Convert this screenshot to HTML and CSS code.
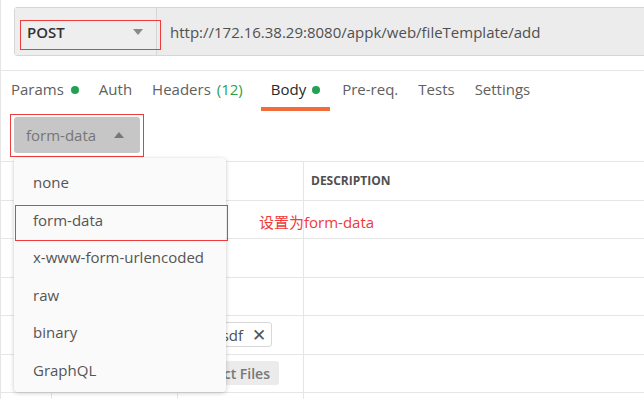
FILE: index.html
```html
<!DOCTYPE html>
<html>
<head>
<meta charset="utf-8">
<link rel="stylesheet" href="styles.css">
</head>
<body>
<div class="page">
  <div class="top">
    <div class="urlbar">
      <div class="method">
        <span class="method-name">POST</span>
        <span class="caret-down"></span>
        <span class="mark mark-method"></span>
      </div>
      <div class="url">http://172.16.38.29:8080/appk/web/fileTemplate/add</div>
    </div>
  </div>

  <div class="tabs">
    <div class="tab">Params<span class="dot"></span></div>
    <div class="tab">Auth</div>
    <div class="tab">Headers <span class="count">(12)</span></div>
    <div class="tab active">Body<span class="dot"></span></div>
    <div class="tab">Pre-req.</div>
    <div class="tab">Tests</div>
    <div class="tab">Settings</div>
  </div>

  <div class="bodytype">
    <div class="select-wrap">
      <div class="select">form-data<span class="caret-up"></span></div>
      <span class="mark mark-select"></span>
      <ul class="menu">
        <li>none</li>
        <li>form-data</li>
        <li>x-www-form-urlencoded</li>
        <li>raw</li>
        <li>binary</li>
        <li>GraphQL</li>
        <span class="mark mark-item"></span>
      </ul>
    </div>
    <span class="note">设置为form-data</span>
  </div>

  <div class="table">
    <div class="cell"></div>
    <div class="cell head"></div>
    <div class="cell head"></div>
    <div class="cell head">DESCRIPTION</div>

    <div class="cell"></div><div class="cell"></div><div class="cell"></div><div class="cell"></div>
    <div class="cell"></div><div class="cell"></div><div class="cell"></div><div class="cell"></div>
    <div class="cell"></div><div class="cell"></div><div class="cell"></div><div class="cell"></div>

    <div class="cell"></div><div class="cell"></div>
    <div class="cell val"><span class="chip"><span class="chip-text">test.sdf</span><span class="chip-x">✕</span></span></div>
    <div class="cell"></div>

    <div class="cell"></div><div class="cell"></div>
    <div class="cell val"><span class="btn">Select Files</span></div>
    <div class="cell"></div>

    <div class="cell"></div><div class="cell"></div>
    <div class="cell val"><span class="btn btn-out"></span></div>
    <div class="cell"></div>
  </div>
</div>
</body>
</html>
```

FILE: styles.css
```css
* { box-sizing: border-box; }
html, body { margin: 0; padding: 0; background: #fff; }
body {
  font-family: "Open Sans", "Noto Sans CJK SC", sans-serif;
  font-size: 15px;
  color: #505050;
  overflow: hidden;
  width: 644px;
  height: 399px;
}
.page {
  border-left: 1px solid #e6e6e6;
  height: 399px;
  overflow: hidden;
}

/* top url bar */
.top {
  height: 71px;
  border-bottom: 1px solid #e6e6e6;
  padding: 7px 0 0 13px;
}
.urlbar {
  display: flex;
  height: 49px;
  margin-right: -10px;
  border: 1px solid #d6d6d6;
  border-radius: 3px;
  background: #ececec;
}
.method {
  position: relative;
  width: 142px;
  flex: none;
  display: flex;
  align-items: center;
  padding-left: 12px;
  background: #eeeeee;
  border-right: 1px solid #d6d6d6;
}
.method-name { font-weight: 600; color: #333; flex: 1; }
.caret-down {
  width: 0; height: 0;
  margin-right: 13px;
  border-left: 5px solid transparent;
  border-right: 5px solid transparent;
  border-top: 6px solid #8a8a8a;
}
.url {
  display: flex;
  align-items: center;
  padding-left: 13px;
  color: #505050;
}

/* annotation marks */
.mark {
  position: absolute;
  border: 1px solid #ee3b3b;
  pointer-events: none;
}
.mark-method { left: 5px; top: 12px; width: 141px; height: 30px; }
.mark-select { left: -4px; top: -3px; width: 134px; height: 43px; }
.mark-item { left: 1px; top: 47px; width: 213px; height: 36px; }

/* tabs */
.tabs {
  display: flex;
  padding-left: 0;
  height: 40px;
}
.tab {
  display: flex;
  align-items: flex-start;
  padding: 8px 10px 0;
  height: 40px;
  line-height: 21px;
  color: #606060;
  border-bottom: 4px solid transparent;
}
.tab:first-child .dot { margin-left: 7px; }
.tab.active { color: #282828; border-bottom-color: #f26b3a; margin-left: 8px; margin-right: 2px; }
.dot {
  width: 8px; height: 8px;
  border-radius: 50%;
  background: #22a053;
  margin: 7px 0 0 6px;
}
.count { color: #2aa14f; margin-left: 6px; }

/* body type row */
.bodytype {
  position: relative;
  height: 50px;
  padding: 6px 0 0 13px;
}
.select-wrap { position: relative; width: 126px; }
.select {
  display: flex;
  align-items: center;
  height: 36px;
  padding: 0 12px;
  background: #c6c6c6;
  border-radius: 3px;
  color: #767676;
}
.caret-up {
  width: 0; height: 0;
  margin-left: 18px;
  border-left: 5px solid transparent;
  border-right: 5px solid transparent;
  border-bottom: 6px solid #777;
}
.menu {
  position: absolute;
  z-index: 5;
  left: 0;
  top: 41px;
  width: 212px;
  height: 234px;
  margin: 0;
  padding: 6px 0 0;
  list-style: none;
  background: #fafafa;
  border-radius: 4px;
  box-shadow: 0 1px 4px rgba(0,0,0,0.22);
}
.menu li {
  height: 37.6px;
  line-height: 37.6px;
  padding-left: 19px;
  color: #555;
}
.note {
  position: absolute;
  left: 258px;
  top: 101px;
  font-size: 15px;
  line-height: 20px;
  color: #f03a3a;
}

/* table */
.table {
  display: grid;
  grid-template-columns: 51px 126px 126px 1fr;
  grid-auto-rows: 38.5px;
  border-top: 1px solid #e6e6e6;
}
.cell {
  border-right: 1px solid #e6e6e6;
  border-bottom: 1px solid #e6e6e6;
  display: flex;
  align-items: center;
  padding-left: 7px;
}
.cell:nth-child(4n) { border-right: none; }
.head {
  font-size: 12px;
  font-weight: 700;
  color: #505050;
}
.val { padding-left: 5px; }
.chip {
  display: flex;
  align-items: center;
  justify-content: flex-end;
  width: 89px;
  height: 25px;
  border: 1px solid #d8d8d8;
  border-radius: 3px;
  background: #fff;
  padding-right: 5px;
  color: #505050;
  overflow: hidden;
}
.chip-x { margin-left: 9px; font-size: 17px; line-height: 1; color: #555; }
.btn {
  display: flex;
  align-items: center;
  justify-content: flex-end;
  width: 96px;
  height: 24px;
  padding-right: 9px;
  background: #ebebeb;
  border-radius: 3px;
  color: #777;
  font-size: 14px;
  font-weight: 600;
}
.btn-out {
  background: #fff;
  border: 1px solid #e2e2e2;
  margin-top: 11px;
}
```
